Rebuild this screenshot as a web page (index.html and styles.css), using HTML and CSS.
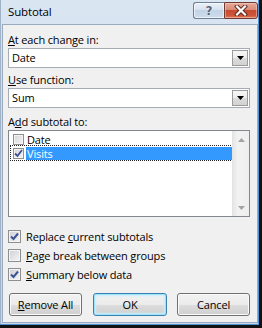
FILE: index.html
```html
<!DOCTYPE html>
<html>
<head>
<meta charset="utf-8">
<link rel="stylesheet" href="styles.css">
</head>
<body>
<div class="window">
  <div class="titlebar">
    <span class="title">Subtotal</span>
    <div class="caption-btns">
      <span class="cbtn help"><span class="q">?</span></span>
      <span class="cbtn close">
        <svg width="14" height="11" viewBox="0 0 14 11">
          <path d="M3 1.5 L11 9.5 M11 1.5 L3 9.5" stroke="#5a2418" stroke-width="4" stroke-linecap="square" fill="none"/>
          <path d="M3 1.5 L11 9.5 M11 1.5 L3 9.5" stroke="#ffffff" stroke-width="2.2" stroke-linecap="square" fill="none"/>
        </svg>
      </span>
    </div>
  </div>
  <div class="panel">
    <div class="label"><u>A</u>t each change in:</div>
    <div class="combo">
      <span class="val">Date</span>
      <span class="drop"><svg width="7" height="4" viewBox="0 0 7 4"><path d="M0 0 H7 L3.5 4 Z" fill="#000"/></svg></span>
    </div>
    <div class="label l2"><u>U</u>se function:</div>
    <div class="combo">
      <span class="val">Sum</span>
      <span class="drop"><svg width="7" height="4" viewBox="0 0 7 4"><path d="M0 0 H7 L3.5 4 Z" fill="#000"/></svg></span>
    </div>
    <div class="label l3">A<u>d</u>d subtotal to:</div>
    <div class="listbox">
      <div class="items">
        <div class="item">
          <span class="lcb"></span><span class="txt">Date</span>
        </div>
        <div class="item focus">
          <span class="lcb"><svg width="9" height="9" viewBox="0 0 9 9"><path d="M1 4.5 L3.5 7 L8 1" stroke="#3f5296" stroke-width="1.8" fill="none"/></svg></span><span class="txt sel">Visits</span>
        </div>
      </div>
      <div class="scrollbar">
        <span class="arrow"><svg width="7" height="4" viewBox="0 0 7 4"><path d="M0 4 H7 L3.5 0 Z" fill="#a3a3a3"/></svg></span>
        <span class="arrow"><svg width="7" height="4" viewBox="0 0 7 4"><path d="M0 0 H7 L3.5 4 Z" fill="#a3a3a3"/></svg></span>
      </div>
    </div>
    <div class="checks">
      <div class="check"><span class="cb"><svg width="11" height="11" viewBox="0 0 11 11"><path d="M2 5.5 L4.5 8 L9 2.5" stroke="#3f5296" stroke-width="2" fill="none"/></svg></span><span>Replace <u>c</u>urrent subtotals</span></div>
      <div class="check"><span class="cb"></span><span><u>P</u>age break between groups</span></div>
      <div class="check"><span class="cb"><svg width="11" height="11" viewBox="0 0 11 11"><path d="M2 5.5 L4.5 8 L9 2.5" stroke="#3f5296" stroke-width="2" fill="none"/></svg></span><span><u>S</u>ummary below data</span></div>
    </div>
    <div class="buttons">
      <span class="btn remove"><u>R</u>emove All</span>
      <span class="btn ok">OK</span>
      <span class="btn cancel">Cancel</span>
    </div>
  </div>
</div>
</body>
</html>
```

FILE: styles.css
```css
* { box-sizing: border-box; }
html, body { margin: 0; padding: 0; }
body {
  width: 262px;
  height: 328px;
  overflow: hidden;
  background: #111;
  font-family: "Open Sans", "Noto Sans", sans-serif;
  font-size: 11px;
  letter-spacing: -0.15px;
  color: #000;
}
.window {
  width: 262px;
  height: 328px;
  display: flex;
  flex-direction: column;
  background: linear-gradient(#dbe6f3, #cddbec 40%, #c6d6ea);
  border-right: 3px solid #121212;
  border-bottom: 3px solid #121212;
  box-shadow: inset -1px -1px 0 #4f93d6, inset 1px 0 0 #9fb2c8;
}
.titlebar {
  height: 24px;
  display: flex;
  align-items: center;
  padding-left: 8px;
}
.title {
  font-size: 11.5px;
  color: #000;
  margin-top: -1px;
}
.caption-btns {
  margin-left: auto;
  align-self: flex-start;
  margin-top: 2px;
  display: flex;
  margin-right: 1px;
}
.cbtn {
  height: 17px;
  display: flex;
  align-items: center;
  justify-content: center;
  border: 1px solid #6d7f97;
}
.help {
  width: 31px;
  border-radius: 3px 0 0 3px;
  border-right: none;
  background: linear-gradient(#eaf0f7, #d8e3f0 45%, #c3d3e6 50%, #cfdcec);
  box-shadow: inset 0 0 0 1px rgba(255,255,255,0.6);
}
.q {
  font-family: "DejaVu Sans", sans-serif;
  font-size: 12px;
  font-weight: bold;
  color: #56647a;
  text-shadow: 0 0 1px #fff, 0 0 1px #fff;
  line-height: 1;
}
.close {
  width: 34px;
  border-radius: 0 3px 3px 0;
  border-color: #6b3a33;
  background: linear-gradient(#e7a899, #d88c78 45%, #c54a2f 50%, #d0573b 85%, #e07c5f);
  box-shadow: inset 0 0 0 1px rgba(255,220,210,0.45);
}
.panel {
  flex: 1;
  margin: 0 1px 2px 2px;
  border: 1px solid #9aabbf;
  background: #f0f0f0;
  padding: 7px 7px 0 5px;
  display: flex;
  flex-direction: column;
}
.label {
  height: 16px;
  line-height: 16px;
}
.l2 { margin-top: 4px; }
.l3 { margin-top: 6px; }
.combo {
  height: 20px;
  border: 1px solid #a5acb5;
  background: #fff;
  display: flex;
  align-items: center;
}
.val {
  padding-left: 3px;
  flex: 1;
  line-height: 16px;
}
.drop {
  width: 16px;
  height: 16px;
  margin-right: 1px;
  border: 1px solid #9b9b9b;
  background: linear-gradient(#f7f7f7, #ececec 50%, #dcdcdc 51%, #d2d2d2);
  display: flex;
  align-items: center;
  justify-content: center;
}
.listbox {
  height: 87px;
  border: 1px solid #828790;
  background: #fff;
  display: flex;
}
.items {
  flex: 1;
  padding: 1px 0 0 2px;
}
.item {
  height: 14px;
  display: flex;
  align-items: center;
  width: 221px;
}
.item.focus {
  outline: 1px dotted #222;
  outline-offset: 0;
}
.lcb {
  width: 11px;
  height: 11px;
  margin-left: 2px;
  margin-right: 2px;
  border: 1px solid #8e8f8f;
  background: linear-gradient(135deg, #d4d7dc, #f4f4f4);
  box-shadow: inset 0 0 0 1px #f4f4f4;
  display: flex;
  align-items: center;
  justify-content: center;
}
.txt {
  padding-left: 1px;
  line-height: 13px;
  height: 13px;
  flex: 1;
  align-self: flex-end;
}
.txt.sel {
  background: #3399ff;
  color: #fff;
}
.scrollbar {
  width: 17px;
  background: linear-gradient(90deg, #e6e6e6, #f2f2f2 30%, #eeeeee);
  border-left: 1px solid #e3e3e3;
  display: flex;
  flex-direction: column;
  justify-content: space-between;
}
.arrow {
  height: 17px;
  display: flex;
  align-items: center;
  justify-content: center;
}
.checks {
  margin-top: 10px;
  display: flex;
  flex-direction: column;
}
.check {
  height: 19px;
  display: flex;
  align-items: center;
}
.cb {
  width: 13px;
  height: 13px;
  margin-right: 5px;
  border: 1px solid #8e8f8f;
  background: linear-gradient(135deg, #cbcfd5, #f6f6f6);
  box-shadow: inset 0 0 0 1px #f4f4f4;
  display: flex;
  align-items: center;
  justify-content: center;
}
.buttons {
  margin-top: 9px;
  display: flex;
  padding-left: 1px;
}
.btn {
  width: 73px;
  height: 23px;
  border: 1px solid #707070;
  border-radius: 3px;
  background: linear-gradient(#f2f2f2, #ebebeb 50%, #dddddd 51%, #cfcfcf);
  box-shadow: inset 0 0 0 1px #fbfbfb;
  display: flex;
  align-items: center;
  justify-content: center;
}
.ok {
  width: 74px;
  margin-left: 11px;
  border-color: #3c7fb1;
  box-shadow: inset 0 0 0 1px #9fe3fb, inset 0 0 2px 2px #c9effc;
}
.cancel {
  margin-left: 10px;
}
u { text-decoration: underline; text-underline-offset: 1px; }
```
